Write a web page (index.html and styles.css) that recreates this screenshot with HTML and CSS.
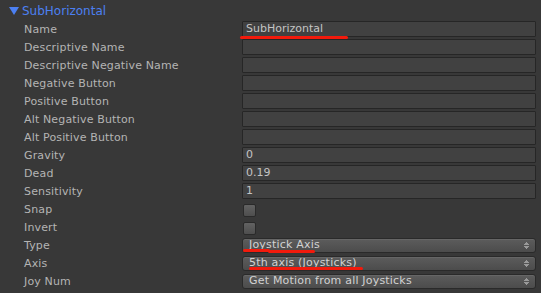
FILE: index.html
```html
<!DOCTYPE html>
<html lang="en">
<head>
    <meta charset="UTF-8">
    <title>Input Axis - SubHorizontal</title>
    <link rel="stylesheet" href="styles.css">
</head>
<body>
    <div class="inspector">
        <div class="foldout">
            <span class="arrow"></span>
            <span class="foldout-title">SubHorizontal</span>
        </div>

        <div class="row">
            <span class="label">Name</span>
            <div class="field">SubHorizontal</div>
        </div>
        <div class="row">
            <span class="label">Descriptive Name</span>
            <div class="field"></div>
        </div>
        <div class="row">
            <span class="label">Descriptive Negative Name</span>
            <div class="field"></div>
        </div>
        <div class="row">
            <span class="label">Negative Button</span>
            <div class="field"></div>
        </div>
        <div class="row">
            <span class="label">Positive Button</span>
            <div class="field"></div>
        </div>
        <div class="row">
            <span class="label">Alt Negative Button</span>
            <div class="field"></div>
        </div>
        <div class="row">
            <span class="label">Alt Positive Button</span>
            <div class="field"></div>
        </div>
        <div class="row">
            <span class="label">Gravity</span>
            <div class="field">0</div>
        </div>
        <div class="row">
            <span class="label">Dead</span>
            <div class="field">0.19</div>
        </div>
        <div class="row">
            <span class="label">Sensitivity</span>
            <div class="field">1</div>
        </div>
        <div class="row">
            <span class="label">Snap</span>
            <div class="toggle"></div>
        </div>
        <div class="row">
            <span class="label">Invert</span>
            <div class="toggle"></div>
        </div>
        <div class="row">
            <span class="label">Type</span>
            <div class="popup"><span class="popup-text">Joystick Axis</span><span class="updown"></span></div>
        </div>
        <div class="row">
            <span class="label">Axis</span>
            <div class="popup"><span class="popup-text">5th axis (Joysticks)</span><span class="updown"></span></div>
        </div>
        <div class="row">
            <span class="label">Joy Num</span>
            <div class="popup"><span class="popup-text">Get Motion from all Joysticks</span><span class="updown"></span></div>
        </div>
    </div>

    <!-- red pen marks drawn over the screenshot -->
    <div class="mark mark-name"></div>
    <div class="mark mark-type"></div>
    <div class="mark mark-type2"></div>
    <div class="mark mark-axis"></div>
</body>
</html>
```

FILE: styles.css
```css
* {
    margin: 0;
    padding: 0;
    box-sizing: border-box;
}

body {
    background-color: #383838;
    color: #b4b4b4;
    font-family: 'DejaVu Sans', Verdana, sans-serif;
    font-size: 11px;
    width: 541px;
    height: 293px;
    overflow: hidden;
    position: relative;
}

.inspector {
    padding: 1px 5px 0 0;
}

.foldout {
    display: flex;
    align-items: center;
    height: 19px;
    padding-left: 9px;
}

.arrow {
    width: 0;
    height: 0;
    border-left: 5px solid transparent;
    border-right: 5px solid transparent;
    border-top: 8px solid #4c80f2;
    margin-right: 3px;
    margin-top: 1px;
}

.foldout-title {
    color: #4c80f2;
    font-size: 12px;
}

.row {
    display: flex;
    align-items: flex-start;
    height: 18px;
}

.label {
    width: 242px;
    padding-left: 24px;
    padding-top: 1px;
    line-height: 18px;
    letter-spacing: 0.15px;
    white-space: nowrap;
}

.field {
    flex: 1;
    height: 16px;
    margin-top: 1px;
    background-color: #414141;
    border: 1px solid #262626;
    border-radius: 1px;
    color: #c4c4c4;
    padding-left: 3px;
    line-height: 14px;
}

.toggle {
    width: 13px;
    height: 13px;
    margin-top: 4px;
    margin-left: 1px;
    background: linear-gradient(#626262, #4e4e4e);
    border: 1px solid #2a2a2a;
    border-radius: 2px;
}

.popup {
    flex: 1;
    display: flex;
    align-items: center;
    height: 15px;
    margin-top: 2px;
    padding-left: 6px;
    background: linear-gradient(#5c5c5c, #4c4c4c);
    border: 1px solid #2a2a2a;
    border-radius: 3px;
    color: #d2d2d2;
    box-shadow: inset 0 1px 0 #666;
}

.popup-text {
    line-height: 12px;
    margin-top: -2px;
    letter-spacing: 0.2px;
}

.updown {
    margin-left: auto;
    margin-right: 6px;
    width: 5px;
    height: 9px;
    background:
        linear-gradient(to bottom right, transparent 50%, #9a9a9a 50%) 0 0 / 3px 4px no-repeat,
        linear-gradient(to bottom left, transparent 50%, #9a9a9a 50%) 2px 0 / 3px 4px no-repeat,
        linear-gradient(to top right, transparent 50%, #9a9a9a 50%) 0 5px / 3px 4px no-repeat,
        linear-gradient(to top left, transparent 50%, #9a9a9a 50%) 2px 5px / 3px 4px no-repeat;
}

.mark {
    position: absolute;
    background-color: #f21a0c;
    height: 3px;
    border-radius: 2px;
}

.mark-name {
    left: 240px;
    top: 36px;
    width: 108px;
}

.mark-type {
    left: 243px;
    top: 249px;
    width: 27px;
}

.mark-type2 {
    left: 268px;
    top: 250px;
    width: 47px;
}

.mark-axis {
    left: 249px;
    top: 267px;
    width: 114px;
}
```
